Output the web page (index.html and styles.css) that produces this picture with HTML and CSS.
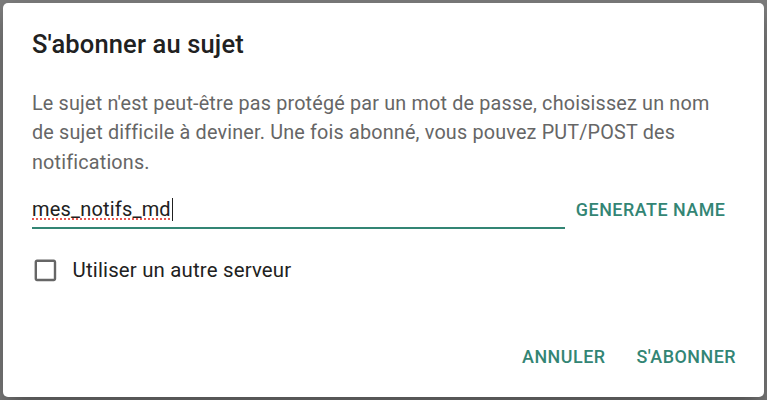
FILE: index.html
```html
<!DOCTYPE html>
<html lang="fr">
<head>
<meta charset="utf-8">
<title>S'abonner au sujet</title>
<link rel="stylesheet" href="styles.css">
</head>
<body>
<div class="dialog" role="dialog" aria-labelledby="dlg-title">
  <h2 class="title" id="dlg-title">S'abonner au sujet</h2>
  <div class="content">
    <p class="desc">Le sujet n'est peut-être pas protégé par un mot de passe, choisissez un nom de sujet difficile à deviner. Une fois abonné, vous pouvez PUT/POST des notifications.</p>
    <div class="field-row">
      <div class="field" role="textbox" aria-label="Nom du sujet"><span class="value">mes_notifs_md</span><span class="caret"></span></div>
      <button class="btn">Generate name</button>
    </div>
    <label class="check-row">
      <svg class="check-icon" viewBox="0 0 24 24" aria-hidden="true"><path d="M19 5v14H5V5h14m0-2H5c-1.1 0-2 .9-2 2v14c0 1.1.9 2 2 2h14c1.1 0 2-.9 2-2V5c0-1.1-.9-2-2-2z"/></svg>
      <span class="check-label">Utiliser un autre serveur</span>
    </label>
  </div>
  <div class="actions">
    <button class="btn">Annuler</button>
    <button class="btn">S'abonner</button>
  </div>
</div>
</body>
</html>
```
FILE: styles.css
```css
html, body {
  margin: 0;
  height: 100%;
}
body {
  background: #7f7f7f;
  padding: 3px;
  box-sizing: border-box;
  font-family: Roboto, "Liberation Sans", Arial, sans-serif;
}
.dialog {
  width: 761px;
  height: 394px;
  box-sizing: border-box;
  background: #fff;
  border-radius: 5px;
  box-shadow: 0 11px 15px -7px rgba(0,0,0,0.2), 0 24px 38px 3px rgba(0,0,0,0.14), 0 9px 46px 8px rgba(0,0,0,0.12);
  display: flex;
  flex-direction: column;
}
.title {
  margin: 0;
  padding: 25px 29px 0;
  font-size: 25.5px;
  line-height: 32px;
  font-weight: 500;
  color: #212121;
  letter-spacing: 0.15px;
}
.content {
  padding: 0 29px;
}
.desc {
  margin: 28.7px 0 0;
  font-size: 19.8px;
  line-height: 29.5px;
  color: #666;
  letter-spacing: 0.18px;
}
.field-row {
  display: flex;
  align-items: baseline;
  margin-top: 10.2px;
}
.field {
  flex: 1;
  font-size: 20px;
  line-height: 23px;
  color: #212121;
  padding-bottom: 6px;
  border-bottom: 2px solid #338574;
  letter-spacing: 0.18px;
}
.value {
  text-decoration: underline dotted #e8574f;
  text-decoration-thickness: 2px;
  text-underline-offset: 3px;
}
.caret {
  display: inline-block;
  width: 1px;
  height: 23px;
  background: #212121;
  vertical-align: -5px;
  margin-left: 1px;
}
.btn {
  background: none;
  border: 0;
  margin: 0;
  font-family: inherit;
  font-size: 17.9px;
  line-height: 29.4px;
  font-weight: 500;
  letter-spacing: 0.5px;
  text-transform: uppercase;
  color: #338574;
  padding: 7.2px 9.6px;
  border-radius: 4.8px;
  cursor: pointer;
}
.field-row .btn {
  margin-left: 1px;
}
.check-row {
  display: flex;
  align-items: center;
  margin-top: 24.4px;
  cursor: pointer;
}
.check-icon {
  width: 28.8px;
  height: 28.8px;
  fill: #666;
  margin-left: -0.6px;
  flex: none;
}
.check-label {
  margin-left: 12.3px;
  font-size: 20.4px;
  line-height: 28.8px;
  color: #212121;
  letter-spacing: 0.18px;
}
.actions {
  margin-top: auto;
  display: flex;
  justify-content: flex-end;
  gap: 11.8px;
  padding: 0 18.4px 18.8px 0;
}
```
